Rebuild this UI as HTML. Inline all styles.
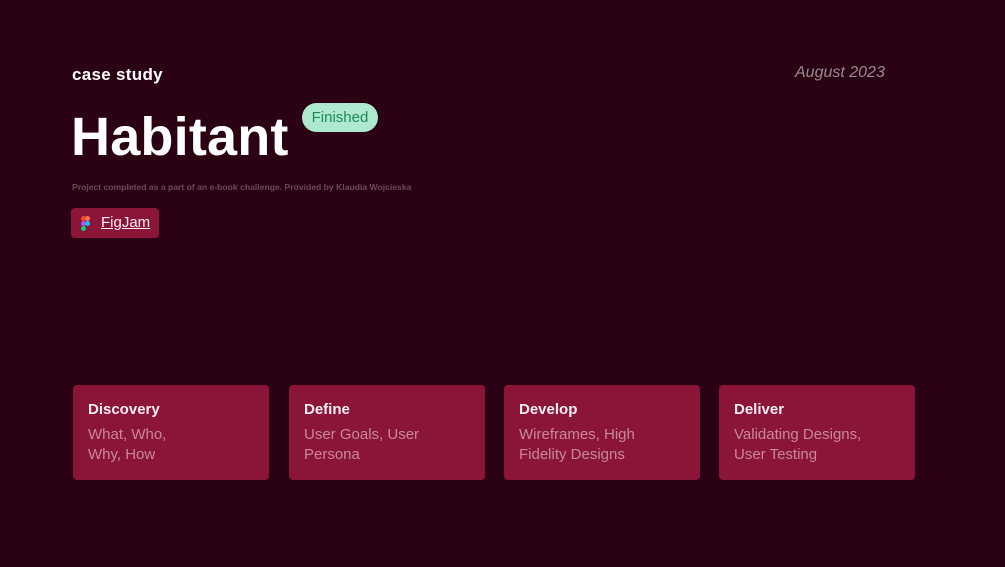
<!DOCTYPE html>
<html><head><meta charset="utf-8"><style>
*{margin:0;padding:0;box-sizing:border-box}
body{width:1005px;height:567px;background:#2b0213;font-family:"Liberation Sans",sans-serif;position:relative;overflow:hidden;color:#fff}
.a{position:absolute;white-space:nowrap}
.card{position:absolute;top:385px;width:196px;height:95px;background:#8a1538;border-radius:4px;padding:16px 15px}
.card h3{font-size:15px;font-weight:bold;color:#fbeef2;margin-bottom:7px}
.card p{font-size:15px;line-height:19.5px;color:#c9879b}
</style></head><body>
<div class="a" style="left:72px;top:65px;font-size:17px;font-weight:bold;letter-spacing:0.3px">case study</div>
<div class="a" style="left:795px;top:64px;font-size:16px;font-style:italic;color:#9a8a90">August 2023</div>
<div class="a" style="left:71px;top:106px;font-size:54px;font-weight:bold;letter-spacing:0.2px">Habitant</div>
<div class="a" style="left:302px;top:103px;width:76px;height:29px;border-radius:15px;background:#aee8cf;color:#1f8a5a;font-size:15px;text-align:center;line-height:29px">Finished</div>
<div class="a" style="left:72px;top:182px;font-size:8.6px;font-weight:bold;color:#6a4a58">Project completed as a part of an e-book challenge. Provided by Klaudia Wojcieska</div>
<div class="a" style="left:71px;top:208px;width:88px;height:30px;background:#8a1538;border-radius:4px">
<svg style="position:absolute;left:10px;top:8px" width="10" height="15" viewBox="0 0 10 15"><rect x="0" y="0" width="5" height="5" rx="2.5" fill="#f24e1e"/><rect x="4" y="0" width="5" height="5" rx="2.5" fill="#ff7262"/><rect x="0" y="5" width="5" height="5" rx="2.5" fill="#a259ff"/><circle cx="6.5" cy="7.5" r="2.5" fill="#1abcfe"/><rect x="0" y="10" width="5" height="5" rx="2.5" fill="#0acf83"/></svg>
<span style="position:absolute;left:30px;top:6px;font-size:15px;text-decoration:underline;color:#fbeef2">FigJam</span></div>
<div class="card" style="left:73px"><h3>Discovery</h3><p>What, Who,<br>Why, How</p></div>
<div class="card" style="left:289px"><h3>Define</h3><p>User Goals, User<br>Persona</p></div>
<div class="card" style="left:504px"><h3>Develop</h3><p>Wireframes, High<br>Fidelity Designs</p></div>
<div class="card" style="left:719px"><h3>Deliver</h3><p>Validating Designs,<br>User Testing</p></div>
</body></html>
